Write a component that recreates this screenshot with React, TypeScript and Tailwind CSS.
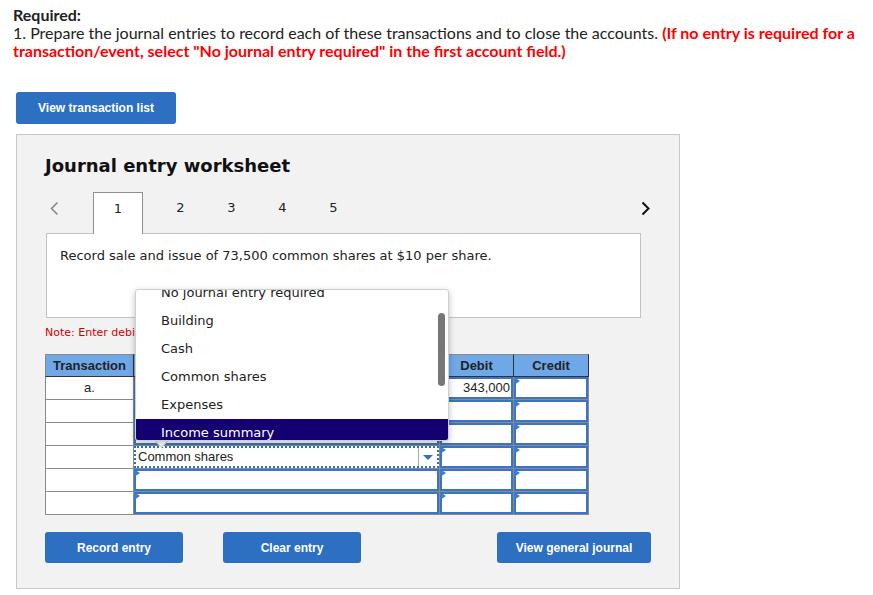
import React from 'react';

const accounts = ['No journal entry required', 'Building', 'Cash', 'Common shares', 'Expenses', 'Income summary'];

function Marker() {
  return (
    <span className="absolute left-0 top-0 h-0 w-0 border-y-[4px] border-l-[6px] border-y-transparent border-l-[#3a7bd5]" />
  );
}

function InputCell({ value, marker = true }: { value?: string; marker?: boolean }) {
  return (
    <div className="relative h-[23px] border-b border-r border-[#8a8a8a] bg-white">
      <div className="flex h-full items-center justify-end border-2 border-[#3a74c2] pr-[1px] text-[13px] text-[#222]">
        {value}
      </div>
      {marker && !value && <Marker />}
    </div>
  );
}

function SelectCell() {
  return (
    <div className="relative h-[23px] border-b border-r border-[#8a8a8a] bg-white">
      <div className="flex h-full items-center border-2 border-dotted border-[#2f6fc4]">
        <span className="flex-1 pl-[2px] text-[13px] text-[#222]">Common shares</span>
        <span className="flex h-full w-[19px] items-center justify-center border-l border-[#aaa]">
          <span className="h-0 w-0 border-x-[5px] border-t-[5px] border-x-transparent border-t-[#2f6fc4]" />
        </span>
      </div>
    </div>
  );
}

function TxCell({ label }: { label?: string }) {
  return (
    <div className="flex h-[23px] items-center justify-center border-b border-l border-r border-[#8a8a8a] bg-white text-[13px] text-[#222]">
      {label}
    </div>
  );
}

export default function App() {
  const rows = [0, 1, 2, 3, 4, 5];

  return (
    <div className="relative h-[595px] w-[873px] overflow-hidden bg-white font-['Lato',sans-serif] text-[#222]">
      <div className="px-[13px] pt-[6px] text-[16px] leading-[18px]">
        <div className="font-bold">Required:</div>
        <div>
          1. Prepare the journal entries to record each of these transactions and to close the accounts.{' '}
          <span className="font-bold text-[#f00]">
            (If no entry is required for a transaction/event, select "No journal entry required" in the first account field.)
          </span>
        </div>
      </div>

      <button className="ml-[16px] mt-[32px] flex h-[32px] w-[160px] items-center justify-center rounded-[3px] bg-[#2d6fc0] font-['Liberation_Sans',sans-serif] text-[12px] font-bold text-white">
        View transaction list
      </button>

      <div className="relative ml-[16px] mt-[10px] h-[455px] w-[664px] border border-[#c9c9c9] bg-[#f2f2f2] pl-[28px] pt-[19px] font-['DejaVu_Sans',sans-serif]">
        <h2 className="text-[18px] font-bold leading-[24px] text-[#111]">Journal entry worksheet</h2>

        <div className="mt-[14px] flex h-[41px] w-[605px] items-start text-[13px]">
          <div className="flex h-[32px] w-[48px] items-center pl-[5px]">
            <svg width="9" height="15" viewBox="0 0 9 15" fill="none">
              <path d="M7.5 1.5 L1.5 7.5 L7.5 13.5" stroke="#8a8a8a" strokeWidth="1.6" />
            </svg>
          </div>
          <div className="relative z-10 h-[42px] w-[50px] border-l border-r border-t border-[#8f8f8f] bg-white pt-[8px] text-center leading-[16px]">
            1
          </div>
          <div className="ml-[12px] flex leading-[16px]">
            {[2, 3, 4, 5].map((n) => (
              <div key={n} className="w-[51px] pt-[8px] text-center">
                {n}
              </div>
            ))}
          </div>
          <div className="flex-1" />
          <div className="flex h-[32px] items-center">
            <svg width="9" height="15" viewBox="0 0 9 15" fill="none">
              <path d="M1.5 1.5 L7.5 7.5 L1.5 13.5" stroke="#111" strokeWidth="2" />
            </svg>
          </div>
        </div>

        <div className="ml-[1px] h-[85px] w-[595px] border border-[#c4c4c4] bg-white pl-[13px] pt-[14px] text-[13px] leading-[16px]">
          Record sale and issue of 73,500 common shares at $10 per share.
        </div>

        <div className="mt-[8px] text-[11px] leading-[14px] text-[#d40000]">Note: Enter debits before credits.</div>

        <div className="mt-[14px] grid w-[544px] grid-cols-[89px_306px_74px_75px] font-['Liberation_Sans',sans-serif]">
          <div className="flex h-[23px] items-center justify-center border-b border-l border-r border-t border-b-[#333] border-l-[#8a8a8a] border-r-[#333] border-t-[#8a8a8a] bg-[#6fa8e8] text-[13px] font-bold text-[#222]">
            Transaction
          </div>
          <div className="flex h-[23px] items-center justify-center border-b border-r border-t border-b-[#333] border-r-[#333] border-t-[#8a8a8a] bg-[#6fa8e8] text-[13px] font-bold text-[#222]">
            General Journal
          </div>
          <div className="flex h-[23px] items-center justify-center border-b border-r border-t border-b-[#333] border-r-[#333] border-t-[#8a8a8a] bg-[#6fa8e8] text-[13px] font-bold text-[#222]">
            Debit
          </div>
          <div className="flex h-[23px] items-center justify-center border-b border-r border-t border-b-[#333] border-r-[#333] border-t-[#8a8a8a] bg-[#6fa8e8] text-[13px] font-bold text-[#222]">
            Credit
          </div>

          {rows.map((r) => (
            <React.Fragment key={r}>
              <TxCell label={r === 0 ? 'a.' : undefined} />
              {r === 3 ? <SelectCell /> : <InputCell value={r === 0 ? 'Cash' : undefined} />}
              <InputCell value={r === 0 ? '343,000' : undefined} />
              <InputCell />
            </React.Fragment>
          ))}
        </div>

        <div className="mt-[17px] flex font-['Liberation_Sans',sans-serif] text-[12px] font-bold text-white">
          <button className="h-[31px] w-[138px] rounded-[3px] bg-[#2d6fc0]">Record entry</button>
          <button className="ml-[40px] h-[31px] w-[138px] rounded-[3px] bg-[#2d6fc0]">Clear entry</button>
          <button className="ml-[136px] h-[31px] w-[154px] rounded-[3px] bg-[#2d6fc0]">View general journal</button>
        </div>

        {/* caret under the open list */}
        <div className="absolute left-[140px] top-[302px] z-10 h-[9px] w-[9px] rotate-45 border-b border-r border-[#d6d6d6] bg-white" />

        {/* open account dropdown */}
        <div className="absolute left-[118px] top-[154px] z-20 h-[152px] w-[314px] overflow-hidden rounded-[3px] border border-[#cfcfcf] bg-white shadow-[0_2px_6px_rgba(0,0,0,0.25)]">
          <div className="mt-[-11px]">
            {accounts.map((a) => (
              <div
                key={a}
                className={
                  a === 'Income summary'
                    ? 'h-[28px] bg-[#140070] pl-[25px] text-[13px] leading-[28px] text-white'
                    : 'h-[28px] pl-[25px] text-[13px] leading-[28px] text-[#222]'
                }
              >
                {a}
              </div>
            ))}
          </div>
          <div className="absolute left-[302px] top-[23px] h-[73px] w-[7px] rounded-full bg-[#777]" />
        </div>
      </div>
    </div>
  );
}
